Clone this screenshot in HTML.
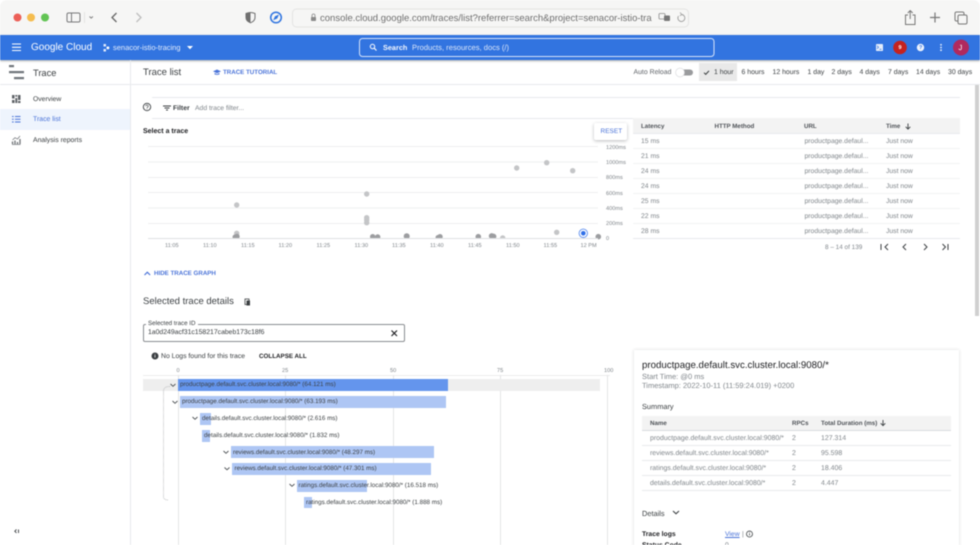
<!DOCTYPE html>
<html><head><meta charset="utf-8"><title>Trace list</title>
<style>
html,body{margin:0;padding:0;background:#fff;width:980px;height:545px;overflow:hidden}
#r{position:relative;width:980px;height:545px;overflow:hidden;font-family:"Liberation Sans",sans-serif;color:#3c4043;filter:blur(.42px);text-rendering:geometricPrecision}
.t{position:absolute;white-space:nowrap;line-height:0;margin-top:.8px}
.b{position:absolute}
.g{color:#80868b}.d{color:#3c4043}.k{color:#202124}
.bl{color:#4a73d8}
.hd{font-size:6.2px;font-weight:bold;color:#4d5156}
.rw{font-size:6.8px;color:#80868b}
.rs{font-size:6.95px;color:#80868b}
.sp{font-size:6.25px;color:#3c4043}
.ax{font-size:5.6px;color:#80868b}
svg{position:absolute;left:0;top:0}
</style></head><body><div id="r">

<div class="b" style="left:0;top:0;width:980px;height:35px;background:#f6f6f5;border-radius:7px 7px 0 0"></div>
<div class="b" style="left:0;top:35px;width:980px;height:25px;background:#3274e0;box-shadow:0 1px 2px rgba(60,64,67,.45)"></div>

<div class="b" style="left:0;top:60px;width:130px;height:485px;border-right:1px solid #e8eaed"></div>
<div class="b" style="left:0;top:84px;width:980px;height:1px;background:#e8eaed"></div>
<div class="b" style="left:0;top:109px;width:130px;height:21px;background:#eef4fd"></div>
<div class="b" style="left:699px;top:63px;width:38px;height:18px;background:#e9e9e9"></div>

<div class="b" style="left:152px;top:97px;width:808px;height:1px;background:#e8eaed"></div>
<div class="b" style="left:152px;top:118px;width:481px;height:1px;background:#e8eaed"></div>
<div class="b" style="left:975px;top:85px;width:4px;height:231px;background:#d0d0d0"></div>

<div class="b" style="left:633px;top:118px;width:327px;height:15px;background:#f3f3f3"></div>
<div class="b" style="left:633px;top:133px;width:327px;height:1px;background:#e8eaed"></div>
<div class="b" style="left:633px;top:148px;width:327px;height:1px;background:#f1f3f4"></div>
<div class="b" style="left:633px;top:163px;width:327px;height:1px;background:#f1f3f4"></div>
<div class="b" style="left:633px;top:178px;width:327px;height:1px;background:#f1f3f4"></div>
<div class="b" style="left:633px;top:193px;width:327px;height:1px;background:#f1f3f4"></div>
<div class="b" style="left:633px;top:208px;width:327px;height:1px;background:#f1f3f4"></div>
<div class="b" style="left:633px;top:223px;width:327px;height:1px;background:#f1f3f4"></div>
<div class="b" style="left:633px;top:238px;width:327px;height:1px;background:#e8eaed"></div>

<div class="b" style="left:634px;top:350px;width:325px;height:200px;background:#fff;box-shadow:0 0 3px rgba(60,64,67,.2)"></div>
<div class="b" style="left:642px;top:416px;width:309px;height:14px;background:#f3f3f3"></div>
<div class="b" style="left:642px;top:430px;width:309px;height:1px;background:#dadce0"></div>
<div class="b" style="left:642px;top:445px;width:309px;height:1px;background:#e8eaed"></div>
<div class="b" style="left:642px;top:460px;width:309px;height:1px;background:#e8eaed"></div>
<div class="b" style="left:642px;top:475px;width:309px;height:1px;background:#e8eaed"></div>
<div class="b" style="left:642px;top:490px;width:309px;height:1px;background:#e8eaed"></div>

<!-- Waterfall backgrounds -->
<div class="b" style="left:143px;top:375px;width:467px;height:1px;background:#eceded"></div>
<div class="b" style="left:178px;top:375px;width:1px;height:170px;background:#e4e5e6"></div>
<div class="b" style="left:285px;top:375px;width:1px;height:170px;background:#e4e5e6"></div>
<div class="b" style="left:393px;top:375px;width:1px;height:170px;background:#e4e5e6"></div>
<div class="b" style="left:500px;top:375px;width:1px;height:170px;background:#e4e5e6"></div>
<div class="b" style="left:607px;top:375px;width:1px;height:170px;background:#e4e5e6"></div>
<div class="b" style="left:143px;top:379px;width:457px;height:12px;background:#eee"></div>
<div class="b" style="left:178px;top:379px;width:270px;height:12px;background:#6495ed"></div>
<div class="b" style="left:180px;top:396px;width:266px;height:12px;background:#aec6f4"></div>
<div class="b" style="left:200px;top:413px;width:11px;height:12px;background:#aec6f4"></div>
<div class="b" style="left:202px;top:430px;width:8px;height:12px;background:#aec6f4"></div>
<div class="b" style="left:231px;top:446px;width:203px;height:12px;background:#aec6f4"></div>
<div class="b" style="left:232px;top:463px;width:199px;height:12px;background:#aec6f4"></div>
<div class="b" style="left:297px;top:480px;width:70px;height:12px;background:#aec6f4"></div>
<div class="b" style="left:304px;top:497px;width:8px;height:11px;background:#aec6f4"></div>

<!-- Trace ID -->
<div class="b" style="left:143px;top:324px;width:260px;height:16px;border:1px solid #8a8d91;border-radius:2px"></div>
<div class="b" style="left:146px;top:321px;width:52px;height:5px;background:#fff"></div>

<!-- RESET -->
<div class="b" style="left:594px;top:123px;width:33px;height:17px;background:#fff;border-radius:2px;box-shadow:0 1px 3px rgba(60,64,67,.35)"></div>

<svg width="980" height="545" viewBox="0 0 980 545" fill="none">
<!-- traffic lights -->
<circle cx="17.5" cy="17.5" r="4" fill="#ec5f57"/><circle cx="31" cy="17.5" r="4" fill="#f5bd4f"/><circle cx="45" cy="17.5" r="4" fill="#62c454"/>
<!-- sidebar toggle -->
<rect x="67" y="13" width="13" height="9" rx="1.5" stroke="#77787a" stroke-width="1"/><path d="M71.5 13v9" stroke="#77787a"/>
<path d="M84.5 12v11" stroke="#e3e3e3"/>
<path d="M89.5 16.5l1.7 1.6 1.7-1.6" stroke="#7d7d7d" stroke-width="1"/>
<path d="M116.500 13l-4.500 4.500 4.500 4.500" stroke="#656565" stroke-width="1.300"/>
<path d="M136.500 13l4.500 4.500-4.500 4.500" stroke="#bdbdbd" stroke-width="1.300"/>
<!-- shield -->
<path d="M250.500 12.500c2 0 3.500.6 4.500 1v4c0 2.800-2 4.300-4.500 5.300-2.500-1-4.500-2.500-4.500-5.300v-4c1-.4 2.500-1 4.500-1z" stroke="#6f6f6f" stroke-width="1"/>
<path d="M250.500 12.500c-2 0-3.500.6-4.500 1v4c0 2.800 2 4.300 4.500 5.300z" fill="#6f6f6f"/>
<!-- compass -->
<circle cx="276" cy="17.500" r="5.300" stroke="#2f74e0" stroke-width="1.500"/>
<path d="M279 14.500l-4 1.800-1.800 4 4-1.800z" fill="#2f74e0"/>
<!-- url bar -->
<rect x="292.500" y="9" width="396" height="18" rx="4" fill="#f6f6f5" stroke="#e4e4e3"/>
<rect x="311" y="17" width="5" height="4" rx=".7" fill="#8a8a8a"/><path d="M312 17v-1.500a1.500 1.500 0 0 1 3 0V17" stroke="#8a8a8a" stroke-width=".8"/>
<!-- translate / reload -->
<rect x="659" y="13.500" width="6" height="5.500" rx="1" stroke="#8a8a8a" stroke-width=".8"/><rect x="664" y="15.500" width="6" height="5.500" rx="1" fill="#777"/>
<path d="M681.500 14.500a3.500 3.500 0 1 1-3 1.500" stroke="#9a9a9a" stroke-width=".9"/><path d="M680 12.500l1.800 1.900-1.900 1.400" stroke="#9a9a9a" stroke-width=".8"/>
<!-- share, plus, tabs -->
<path d="M908 15h-2.500v9.500h9.500V15h-2.500" stroke="#777" stroke-width="1"/><path d="M910.200 19V11M907.800 13l2.400-2.400 2.500 2.400" stroke="#777" stroke-width="1"/>
<path d="M935 12.500v10M930 17.500h10" stroke="#777" stroke-width="1.200"/>
<rect x="955" y="12" width="9" height="9" rx="1.500" stroke="#777"/><rect x="958" y="15" width="9" height="9" rx="1.500" fill="#f6f6f5" stroke="#777"/>
<!-- hamburger -->
<path d="M12 44h9M12 47.300h9M12 50.500h9" stroke="#fff" stroke-width="1.100"/>
<!-- project -->
<rect x="103.500" y="44" width="2.500" height="2.500" fill="#dfe9fb"/><rect x="103.500" y="49" width="2.500" height="2.500" fill="#dfe9fb"/><rect x="106.500" y="46.500" width="2.800" height="2.800" rx="1" fill="#fff"/>
<path d="M187 46l3 3.200 3-3.200z" fill="#fff"/>
<!-- search box -->
<rect x="359.500" y="38.500" width="354.500" height="18" rx="3" stroke="#d6e3f9" stroke-width="1"/>
<circle cx="372.500" cy="46.500" r="2.200" stroke="#fff"/><path d="M374.200 48.200l2.300 2.300" stroke="#fff" stroke-width="1.100"/>
<!-- right icons -->
<rect x="876" y="44" width="7" height="7" rx=".8" fill="#e4edfb"/><path d="M877 45.800l1.500 1.500-1.500 1.500" stroke="#3274e0" stroke-width=".7"/><path d="M879.500 49.300h2" stroke="#3274e0" stroke-width=".7"/>
<circle cx="900" cy="47.500" r="6.800" fill="#c5221f"/>
<circle cx="920.500" cy="47.500" r="3.700" fill="#eef3fd"/>
<circle cx="941" cy="44.800" r=".9" fill="#e4edfb"/><circle cx="941" cy="47.500" r=".9" fill="#e4edfb"/><circle cx="941" cy="50.200" r=".9" fill="#e4edfb"/>
<circle cx="961" cy="47.500" r="8" fill="#b0295e"/>
<!-- trace logo -->
<rect x="9" y="65" width="5" height="2.200" fill="#70757a"/><rect x="9" y="71" width="15" height="2.200" fill="#70757a"/><rect x="14" y="77" width="10" height="2.200" fill="#70757a"/>
<!-- overview icon -->
<g fill="#5f6368"><rect x="12" y="95" width="2.500" height="3.500"/><rect x="12" y="100" width="2.500" height="3"/><rect x="15.300" y="95" width="2" height="1.700"/><rect x="15.300" y="98" width="2" height="5"/><rect x="18" y="95" width="2.500" height="5"/><rect x="18" y="101" width="2.500" height="2"/></g>
<!-- trace list icon -->
<path d="M15 116.500h5.500M15 119.300h5.500M15 122h5.500" stroke="#4a73d8" stroke-width="1"/><path d="M12 116.500h1.700M12 119.300h1.700M12 122h1.700" stroke="#4a73d8" stroke-width="1"/>
<!-- analysis icon -->
<path d="M12.500 144v-2.500M15 144v-3.500M17.500 144v-2M20 144v-5" stroke="#6f7377" stroke-width="1.300"/><path d="M12.500 140l2.500-2.300 2.500 1.300 2.500-3" stroke="#6f7377" stroke-width=".7"/><path d="M12 144.500h8.500" stroke="#6f7377" stroke-width=".7"/>
<!-- collapse -->
<path d="M16.500 529.500l-1.700 1.700 1.700 1.700M18.500 529.500v3.500" stroke="#3c4043" stroke-width=".9"/>
<!-- tutorial icon -->
<path d="M217 69.500l4 1.900-4 1.900-4-1.900z" fill="#4a73d8"/><path d="M214.500 73v1.300c1 .7 4 .7 5 0V73l-2.500 1.100z" fill="#4a73d8"/>
<!-- toggle -->
<rect x="677" y="69.500" width="16" height="6" rx="3" fill="#9a9b9d"/><circle cx="680" cy="72.500" r="4.400" fill="#fff" stroke="#dcdde0" stroke-width=".7"/>
<path d="M704 72.700l1.700 1.700 3.300-3.500" stroke="#3c4043" stroke-width="1"/>
<!-- help -->
<circle cx="147" cy="107" r="3.700" stroke="#3c4043" stroke-width=".9"/><path d="M145.800 106.100a1.200 1.200 0 1 1 1.800 1.100c-.4.300-.6.400-.6.800" stroke="#3c4043" stroke-width=".7"/><circle cx="147" cy="109" r=".4" fill="#3c4043"/>
<!-- filter icon -->
<path d="M163 106h8M164.500 108h5M166 110h2" stroke="#3c4043" stroke-width="1"/>
<!-- chart grid -->
<g stroke="#eeeff0" stroke-width="1"><path d="M148 146.500h450M148 162h450M148 177.500h450M148 192.500h450M148 208h450M148 223.500h450"/></g>
<path d="M148 238.500h450" stroke="#dfe1e3"/>
<!-- chart dots -->
<g fill="#c4c5c7"><circle cx="236.700" cy="205" r="2.700"/><circle cx="366.700" cy="194" r="2.700"/><circle cx="516.700" cy="168" r="2.700"/><circle cx="546.700" cy="162.700" r="2.700"/><circle cx="572.700" cy="170.700" r="2.700"/><circle cx="366.700" cy="217.700" r="2.700"/><circle cx="366.700" cy="220" r="2.700"/><circle cx="366.700" cy="222.700" r="2.700"/><circle cx="236.700" cy="233.300" r="2.700"/><circle cx="556.700" cy="232.300" r="2.700"/><circle cx="502.700" cy="238" r="2.700"/></g>
<g fill="#9c9da0"><circle cx="235" cy="237" r="2.500"/><circle cx="237" cy="236.500" r="2.700"/><circle cx="372.700" cy="236.700" r="2.700"/><circle cx="377.700" cy="237" r="2.700"/><circle cx="406.700" cy="236.300" r="3"/><circle cx="438" cy="237.500" r="2.500"/><circle cx="440" cy="236.700" r="2.700"/><circle cx="478.300" cy="236.700" r="2.800"/><circle cx="491.700" cy="236" r="2.900"/><circle cx="493.500" cy="236.500" r="2.900"/><circle cx="598.300" cy="236.700" r="2.800"/></g>
<rect x="148" y="239" width="450" height="3" fill="#fff"/>
<path d="M148 238.500h450" stroke="#dfe1e3"/>
<circle cx="583.300" cy="233.300" r="4.200" fill="#fff" stroke="#5b8def" stroke-width=".9"/><circle cx="583.300" cy="233.300" r="2.300" fill="#2f6fe8"/>
<!-- hide chevron -->
<path d="M144.500 275l2.800-2.800 2.800 2.800" stroke="#4a73d8" stroke-width="1.200"/>
<!-- copy -->
<rect x="245" y="299" width="4" height="5.500" stroke="#3c4043" stroke-width=".8"/><rect x="246.500" y="300.500" width="3.500" height="5" fill="#3c4043"/>
<!-- X -->
<path d="M391.500 330.500l5.500 5.500M397 330.500l-5.500 5.500" stroke="#202124" stroke-width="1.200"/>
<!-- no logs icon -->
<circle cx="155" cy="356" r="3.500" fill="#3c4043"/><path d="M155 355v2.500M155 353.900v.5" stroke="#fff" stroke-width=".7"/>
<!-- tree -->
<path d="M170 386.500c-4 0-6.500 1-6.500 5V497c0 2 2 3 5 3" stroke="#b5b7b9" stroke-width=".9" stroke-dasharray=".8 .8"/>
<g stroke="#4a4e52" stroke-width=".9">
<path d="M170.500 384l2.500 2.300 2.500-2.300"/><path d="M172.500 401l2.500 2.300 2.500-2.300"/><path d="M192.500 417l2.500 2.300 2.500-2.300"/><path d="M223.500 451l2.500 2.300 2.500-2.300"/><path d="M224.500 467.500l2.500 2.300 2.500-2.300"/><path d="M289.500 484l2.500 2.300 2.500-2.300"/>
</g>
<!-- table sort arrows -->
<path d="M908 123.500v5.500M905.700 126.800l2.300 2.300 2.300-2.300" stroke="#3c4043" stroke-width=".9"/>
<path d="M883 420v5.500M880.700 423.300l2.300 2.300 2.300-2.300" stroke="#3c4043" stroke-width=".9"/>
<!-- pagination -->
<g stroke="#3c4043" stroke-width="1"><path d="M881 244v6M888 244l-3 3 3 3"/><path d="M906 244l-3 3 3 3"/><path d="M924 244l3 3-3 3"/><path d="M942.500 244l3 3-3 3M948 244v6"/></g>
<!-- details chevron -->
<path d="M673 511l3 2.800 3-2.800" stroke="#3c4043" stroke-width="1.100"/>
<!-- info -->
<circle cx="749.500" cy="534" r="3" stroke="#3c4043" stroke-width=".8"/><path d="M749.500 533.200v2.300M749.500 532v.6" stroke="#3c4043" stroke-width=".7"/>
</svg>

<!-- chrome text -->
<div class="t" style="left:320px;top:18px;font-size:9.500px;color:#6f6f6f;width:332px;overflow:hidden;line-height:12px;margin-top:-5.500px">console.cloud.google.com/traces/list?referrer=search&amp;project=senacor-istio-tra</div>
<!-- top bar text -->
<div class="t" style="left:31px;top:47.500px;font-size:10px;color:#fff">Google Cloud</div>
<div class="t" style="left:113px;top:47.500px;font-size:7.500px;color:#e3ecfb">senacor-istio-tracing</div>
<div class="t" style="left:383px;top:47.500px;font-size:7.300px;font-weight:bold;color:#f3f7fe">Search</div>
<div class="t" style="left:412px;top:47.500px;font-size:7.600px;color:#dbe6f9">Products, resources, docs (/)</div>
<div class="t" style="left:898.500px;top:47.500px;font-size:5.500px;font-weight:bold;color:#fff">9</div>
<div class="t" style="left:919px;top:47.500px;font-size:5.500px;font-weight:bold;color:#3274e0">?</div>
<div class="t" style="left:958.500px;top:47.500px;font-size:7.500px;color:#fff">J</div>
<!-- sidebar text -->
<div class="t d" style="left:33px;top:72px;font-size:9.300px">Trace</div>
<div class="t d" style="left:33px;top:99px;font-size:6.800px">Overview</div>
<div class="t bl" style="left:33px;top:119.500px;font-size:6.900px">Trace list</div>
<div class="t d" style="left:33px;top:140px;font-size:6.900px">Analysis reports</div>
<!-- header -->
<div class="t d" style="left:143px;top:72px;font-size:9.500px">Trace list</div>
<div class="t bl" style="left:223px;top:72px;font-size:6.200px;font-weight:bold">TRACE TUTORIAL</div>
<div class="t" style="left:633.500px;top:72.500px;font-size:6.900px;color:#5f6368">Auto Reload</div>
<div class="t d" style="left:714px;top:72.500px;font-size:6.900px">1 hour</div>
<div class="t d" style="left:741.500px;top:72.500px;font-size:6.900px">6 hours</div>
<div class="t d" style="left:772.500px;top:72.500px;font-size:6.900px">12 hours</div>
<div class="t d" style="left:807.500px;top:72.500px;font-size:6.900px">1 day</div>
<div class="t d" style="left:831.500px;top:72.500px;font-size:6.900px">2 days</div>
<div class="t d" style="left:859.500px;top:72.500px;font-size:6.900px">4 days</div>
<div class="t d" style="left:888px;top:72.500px;font-size:6.900px">7 days</div>
<div class="t d" style="left:916px;top:72.500px;font-size:6.900px">14 days</div>
<div class="t d" style="left:948px;top:72.500px;font-size:6.900px">30 days</div>
<!-- filter -->
<div class="t d" style="left:173px;top:108px;font-size:6.800px;font-weight:bold">Filter</div>
<div class="t g" style="left:195px;top:108px;font-size:6.800px">Add trace filter...</div>
<div class="t k" style="left:143px;top:131.500px;font-size:7px;font-weight:bold">Select a trace</div>
<div class="t bl" style="left:600.500px;top:131.500px;font-size:6.500px">RESET</div>
<!-- chart labels -->
<div class="t ax" style="left:606px;top:147px">1200ms</div>
<div class="t ax" style="left:606px;top:162px">1000ms</div>
<div class="t ax" style="left:606px;top:177.500px">800ms</div>
<div class="t ax" style="left:606px;top:193px">600ms</div>
<div class="t ax" style="left:606px;top:208px">400ms</div>
<div class="t ax" style="left:606px;top:223.500px">200ms</div>
<div class="t ax" style="left:606px;top:238.500px">0</div>
<div class="t ax" style="left:165px;top:245px">11:05</div>
<div class="t ax" style="left:203px;top:245px">11:10</div>
<div class="t ax" style="left:241px;top:245px">11:15</div>
<div class="t ax" style="left:278.500px;top:245px">11:20</div>
<div class="t ax" style="left:316.500px;top:245px">11:25</div>
<div class="t ax" style="left:354.500px;top:245px">11:30</div>
<div class="t ax" style="left:392px;top:245px">11:35</div>
<div class="t ax" style="left:430px;top:245px">11:40</div>
<div class="t ax" style="left:468px;top:245px">11:45</div>
<div class="t ax" style="left:506px;top:245px">11:50</div>
<div class="t ax" style="left:543.500px;top:245px">11:55</div>
<div class="t ax" style="left:580.500px;top:245px">12 PM</div>
<div class="t bl" style="left:154px;top:273.500px;font-size:6.200px;font-weight:bold">HIDE TRACE GRAPH</div>
<!-- table -->
<div class="t hd" style="left:641px;top:126px">Latency</div>
<div class="t hd" style="left:714.500px;top:126px">HTTP Method</div>
<div class="t hd" style="left:804px;top:126px">URL</div>
<div class="t hd" style="left:886px;top:126px">Time</div>
<div class="t rw" style="left:641px;top:141px">15 ms</div><div class="t rw" style="left:804.500px;top:141px">productpage.defaul...</div><div class="t rw" style="left:886px;top:141px">Just now</div>
<div class="t rw" style="left:641px;top:156px">21 ms</div><div class="t rw" style="left:804.500px;top:156px">productpage.defaul...</div><div class="t rw" style="left:886px;top:156px">Just now</div>
<div class="t rw" style="left:641px;top:171px">24 ms</div><div class="t rw" style="left:804.500px;top:171px">productpage.defaul...</div><div class="t rw" style="left:886px;top:171px">Just now</div>
<div class="t rw" style="left:641px;top:186px">24 ms</div><div class="t rw" style="left:804.500px;top:186px">productpage.defaul...</div><div class="t rw" style="left:886px;top:186px">Just now</div>
<div class="t rw" style="left:641px;top:201px">25 ms</div><div class="t rw" style="left:804.500px;top:201px">productpage.defaul...</div><div class="t rw" style="left:886px;top:201px">Just now</div>
<div class="t rw" style="left:641px;top:216px">22 ms</div><div class="t rw" style="left:804.500px;top:216px">productpage.defaul...</div><div class="t rw" style="left:886px;top:216px">Just now</div>
<div class="t rw" style="left:641px;top:231px">28 ms</div><div class="t rw" style="left:804.500px;top:231px">productpage.defaul...</div><div class="t rw" style="left:886px;top:231px">Just now</div>
<div class="t g" style="left:825px;top:247.500px;font-size:6.400px">8 – 14 of 139</div>
<!-- details -->
<div class="t d" style="left:143px;top:301px;font-size:9.500px">Selected trace details</div>
<div class="t d" style="left:148px;top:323.500px;font-size:6.200px">Selected trace ID</div>
<div class="t d" style="left:148px;top:332.500px;font-size:6.850px">1a0d249acf31c158217cabeb173c18f6</div>
<div class="t d" style="left:161px;top:356.500px;font-size:6.850px">No Logs found for this trace</div>
<div class="t k" style="left:259px;top:356.500px;font-size:6.250px;font-weight:bold">COLLAPSE ALL</div>
<div class="t ax" style="left:176.500px;top:370.500px">0</div>
<div class="t ax" style="left:282px;top:370.500px">25</div>
<div class="t ax" style="left:390px;top:370.500px">50</div>
<div class="t ax" style="left:497px;top:370.500px">75</div>
<div class="t ax" style="left:604px;top:370.500px">100</div>
<!-- spans -->
<div class="t sp" style="left:180px;top:384.500px">productpage.default.svc.cluster.local:9080/* (64.121 ms)</div>
<div class="t sp" style="left:182px;top:401.500px">productpage.default.svc.cluster.local:9080/* (63.193 ms)</div>
<div class="t sp" style="left:202px;top:418.500px">details.default.svc.cluster.local:9080/* (2.616 ms)</div>
<div class="t sp" style="left:204px;top:435px">details.default.svc.cluster.local:9080/* (1.832 ms)</div>
<div class="t sp" style="left:233px;top:452px">reviews.default.svc.cluster.local:9080/* (48.297 ms)</div>
<div class="t sp" style="left:234.500px;top:468.500px">reviews.default.svc.cluster.local:9080/* (47.301 ms)</div>
<div class="t sp" style="left:298.500px;top:485.500px">ratings.default.svc.cluster.local:9080/* (16.518 ms)</div>
<div class="t sp" style="left:306px;top:502.500px">ratings.default.svc.cluster.local:9080/* (1.888 ms)</div>
<!-- right panel -->
<div class="t k" style="left:642px;top:365.500px;font-size:9.700px">productpage.default.svc.cluster.local:9080/*</div>
<div class="t g" style="left:642px;top:376.500px;font-size:7.500px">Start Time: @0 ms</div>
<div class="t g" style="left:642px;top:385px;font-size:7.500px">Timestamp: 2022-10-11 (11:59:24.019) +0200</div>
<div class="t d" style="left:642px;top:406.500px;font-size:7.400px">Summary</div>
<div class="t hd" style="left:650px;top:423px">Name</div>
<div class="t hd" style="left:792px;top:423px">RPCs</div>
<div class="t hd" style="left:821px;top:423px">Total Duration (ms)</div>
<div class="t rs" style="left:650px;top:438px">productpage.default.svc.cluster.local:9080/*</div><div class="t rs" style="left:792px;top:438px">2</div><div class="t rs" style="left:821px;top:438px">127.314</div>
<div class="t rs" style="left:650px;top:453px">reviews.default.svc.cluster.local:9080/*</div><div class="t rs" style="left:792px;top:453px">2</div><div class="t rs" style="left:821px;top:453px">95.598</div>
<div class="t rs" style="left:650px;top:468px">ratings.default.svc.cluster.local:9080/*</div><div class="t rs" style="left:792px;top:468px">2</div><div class="t rs" style="left:821px;top:468px">18.406</div>
<div class="t rs" style="left:650px;top:483px">details.default.svc.cluster.local:9080/*</div><div class="t rs" style="left:792px;top:483px">2</div><div class="t rs" style="left:821px;top:483px">4.447</div>
<div class="t d" style="left:642px;top:513px;font-size:7.400px">Details</div>
<div class="t k" style="left:642px;top:534px;font-size:6.800px;font-weight:bold">Trace logs</div>
<div class="t bl" style="left:725px;top:534px;font-size:6.800px;text-decoration:underline">View</div>
<div class="t g" style="left:742px;top:534px;font-size:6.800px">|</div>
<div class="t k" style="left:642px;top:545px;font-size:6.800px;font-weight:bold">Status Code</div>
<div class="t g" style="left:725px;top:545px;font-size:6.800px">0</div>

</div></body></html>
